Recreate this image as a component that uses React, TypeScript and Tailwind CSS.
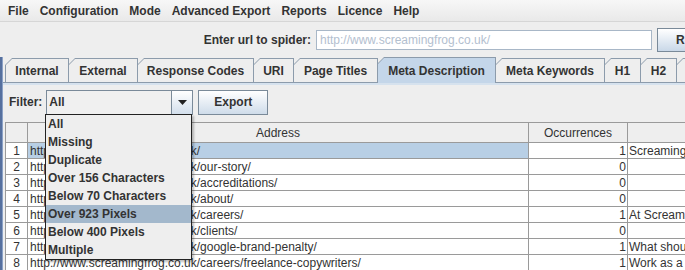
import React from 'react';

const menus = ['File', 'Configuration', 'Mode', 'Advanced Export', 'Reports', 'Licence', 'Help'];

const tabs = [
  { label: 'Internal', w: 64 },
  { label: 'External', w: 70 },
  { label: 'Response Codes', w: 117 },
  { label: 'URI', w: 41 },
  { label: 'Page Titles', w: 85 },
  { label: 'Meta Description', w: 119, active: true },
  { label: 'Meta Keywords', w: 110 },
  { label: 'H1', w: 37 },
  { label: 'H2', w: 37 },
  { label: 'H3', w: 37 },
];

const filters = [
  'All',
  'Missing',
  'Duplicate',
  'Over 156 Characters',
  'Below 70 Characters',
  'Over 923 Pixels',
  'Below 400 Pixels',
  'Multiple',
];

const rows = [
  { url: 'http://www.screamingfrog.co.uk/', n: 1, desc: 'Screaming Frog is a UK search marketing agency' },
  { url: 'http://www.screamingfrog.co.uk/our-story/', n: 0, desc: '' },
  { url: 'http://www.screamingfrog.co.uk/accreditations/', n: 0, desc: '' },
  { url: 'http://www.screamingfrog.co.uk/about/', n: 0, desc: '' },
  { url: 'http://www.screamingfrog.co.uk/careers/', n: 1, desc: 'At Screaming Frog we are always looking' },
  { url: 'http://www.screamingfrog.co.uk/clients/', n: 0, desc: '' },
  { url: 'http://www.screamingfrog.co.uk/google-brand-penalty/', n: 1, desc: 'What should you do' },
  { url: 'http://www.screamingfrog.co.uk/careers/freelance-copywriters/', n: 1, desc: 'Work as a freelance' },
];

const Tab = ({ label, w, active, first }: { label: string; w: number; active?: boolean; first?: boolean }) => (
  <div
    className={`shrink-0 bg-[#8c9bab] pt-px px-px [clip-path:polygon(7px_0,100%_0,100%_100%,0_100%,0_7px)] ${
      first ? '' : 'ml-[-1px]'
    } ${active ? 'h-[26px] mb-[-1px]' : 'h-[24px]'}`}
    style={{ width: w }}
  >
    <div
      className={`h-full flex items-center justify-center font-bold text-[12px] text-[#333333] [clip-path:polygon(6px_0,100%_0,100%_100%,0_100%,0_6px)] ${
        active ? 'bg-[#c4d6e9]' : 'bg-[#eeeeee]'
      }`}
    >
      {label}
    </div>
  </div>
);

export default function App() {
  return (
    <div className="w-[685px] h-[270px] overflow-hidden bg-[#eeeeee] text-[#333333] font-['Liberation_Sans',Arial,sans-serif] text-[12px] leading-none">
      {/* Menu bar */}
      <div className="h-[22px] flex items-center gap-[11px] pl-[8px] bg-linear-to-b from-[#f7f7f7] to-[#e9e9e9] border-b border-[#d6d6d6] font-bold">
        {menus.map((m) => (
          <span key={m}>{m}</span>
        ))}
      </div>

      {/* URL row */}
      <div className="h-[35px] flex items-center">
        <div className="w-[311px] shrink-0 text-right font-bold">Enter url to spider:</div>
        <div className="ml-[5px] w-[336px] shrink-0 h-[20px] bg-white border border-[#a8b7c7] flex items-center pl-[3px] text-[#b3c0cf]">
          http://www.screamingfrog.co.uk/
        </div>
        <div className="ml-[5px] w-[60px] h-[24px] shrink-0 border border-[#7a8a99] bg-linear-to-b from-white to-[#c9d8e8] flex items-center pl-[18px] font-bold">
          R
        </div>
      </div>

      {/* Body with window edge */}
      <div className="flex h-[213px]">
        <div className="w-[3px] shrink-0 bg-[#8ba1c6] border-l-2 border-[#56709e]" />
        <div className="flex-1 min-w-0">
          {/* Tabs */}
          <div className="h-[25px] flex items-end pl-[2px] pt-px">
            {tabs.map((t, i) => (
              <Tab key={t.label} {...t} first={i === 0} />
            ))}
          </div>
          <div className="h-px bg-[#8c9bab]" />
          <div className="h-[2px] bg-[#d6e2ee]" />

          {/* Filter row */}
          <div className="relative">
            <div className="h-[32px] flex items-center pt-[2px]">
              <span className="ml-[6px] font-bold">Filter:</span>
              <div className="ml-[4px] w-[147px] h-[25px] flex border border-[#7a8a99] bg-[#f0f0f0]">
                <div className="flex-1 flex items-center pl-[2px] font-bold">All</div>
                <div className="w-[21px] border-l border-[#7a8a99] bg-linear-to-b from-white to-[#d3dfec] flex items-center justify-center">
                  <svg width="9" height="5" viewBox="0 0 9 5">
                    <path d="M0 0h9L4.5 5z" fill="#222" />
                  </svg>
                </div>
              </div>
              <div className="ml-[5px] w-[70px] h-[25px] border border-[#7a8a99] bg-linear-to-b from-white to-[#cfdcea] flex items-center justify-center font-bold">
                Export
              </div>
            </div>

            {/* Table */}
            <div className="mt-[5px] ml-[2px] border-t border-[#9a9a9a]">
              <div className="flex h-[20px] bg-[#eeeeee] border-b border-[#9a9a9a]">
                <div className="w-[23px] shrink-0 border-l border-r border-[#9a9a9a]" />
                <div className="w-[501px] shrink-0 border-r border-[#9a9a9a] flex items-center justify-center">Address</div>
                <div className="w-[99px] shrink-0 border-r border-[#9a9a9a] flex items-center justify-center">Occurrences</div>
                <div className="flex-1" />
              </div>
              {rows.map((r, i) => (
                <div key={i} className="flex h-[16px] bg-white border-b border-[#9a9a9a] whitespace-nowrap">
                  <div className="w-[23px] shrink-0 border-l border-r border-[#9a9a9a] flex items-center justify-center">
                    {i + 1}
                  </div>
                  <div
                    className={`w-[501px] shrink-0 border-r border-[#9a9a9a] flex items-center pl-[2px] ${
                      i === 0 ? 'bg-[#b8cfe5]' : ''
                    }`}
                  >
                    {r.url}
                  </div>
                  <div className="w-[99px] shrink-0 border-r border-[#9a9a9a] flex items-center justify-end pr-[1px]">
                    {r.n}
                  </div>
                  <div className="flex-1 min-w-0 overflow-hidden flex items-center pl-[1px]">{r.desc}</div>
                </div>
              ))}
            </div>

            {/* Dropdown popup */}
            <div className="absolute left-[42px] top-[29px] w-[147px] bg-[#eeeeee] border border-[#222] shadow-[2px_2px_2px_rgba(0,0,0,0.25)]">
              {filters.map((f) => (
                <div
                  key={f}
                  className={`h-[18px] flex items-center pl-[2px] font-bold ${
                    f === 'Over 923 Pixels' ? 'bg-[#a3b8cc]' : ''
                  }`}
                >
                  {f}
                </div>
              ))}
            </div>
          </div>
        </div>
      </div>
    </div>
  );
}
